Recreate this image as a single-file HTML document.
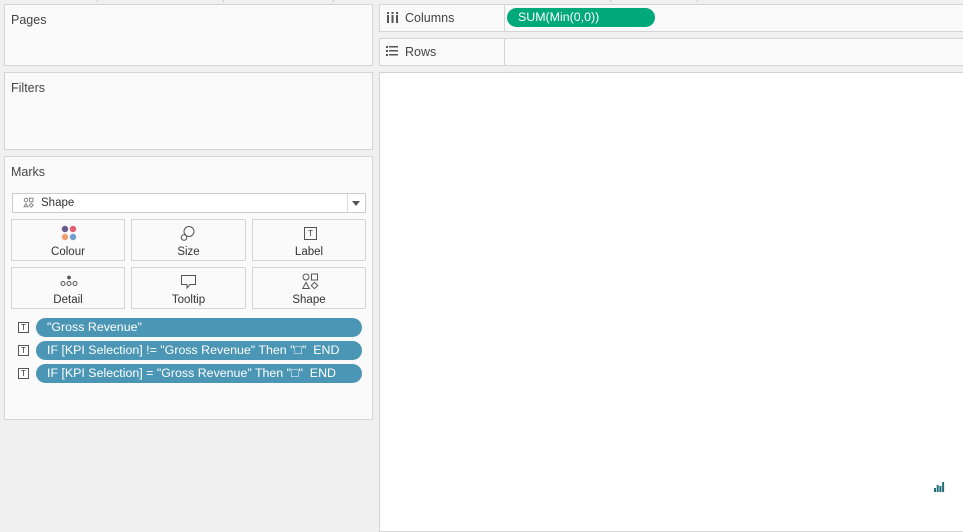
<!DOCTYPE html>
<html><head><style>
body{margin:0;width:963px;height:517px;background:#f0f0f0;font-family:"Liberation Sans",sans-serif;font-size:12px;color:#333;position:relative;overflow:hidden}
.a{position:absolute;box-sizing:border-box}
.panel{background:#fafafa;border:1px solid #d4d4d4}
.t{position:absolute;left:6px;top:8px;color:#444;font-size:12.5px}
.btn{background:#fafafa;border:1px solid #d4d4d4;text-align:center;font-size:11.5px}
.btn span{position:absolute;bottom:2px;left:0;right:0}
.pill{background:#4a96b4;color:#fff;border-radius:10px;height:19px;line-height:19px;padding-left:11px;font-size:12.4px}
.ti{width:11px;height:11px;border:1px solid #555;font-size:8px;line-height:10px;text-align:center;color:#333;background:#fff}
</style></head><body>
<div class="a" style="left:97px;top:0;width:1px;height:2px;background:#ccc"></div>
<div class="a" style="left:223px;top:0;width:1px;height:2px;background:#ccc"></div>
<div class="a" style="left:333px;top:0;width:1px;height:2px;background:#ccc"></div>
<div class="a" style="left:610px;top:0;width:1px;height:2px;background:#ccc"></div>
<div class="a" style="left:697px;top:0;width:1px;height:2px;background:#ccc"></div>
<div class="a panel" style="left:4px;top:4px;width:369px;height:62px"><div class="t">Pages</div></div>
<div class="a panel" style="left:4px;top:72px;width:369px;height:78px"><div class="t">Filters</div></div>
<div class="a panel" style="left:4px;top:156px;width:369px;height:264px"><div class="t">Marks</div></div>
<div class="a" style="left:12px;top:193px;width:354px;height:20px;background:#fff;border:1px solid #ccc">
<svg style="position:absolute;left:10px;top:3px" width="11" height="11" viewBox="0 0 11 11" fill="none" stroke="#888" stroke-width="1"><circle cx="3" cy="3" r="1.8"/><rect x="6.5" y="1.2" width="3.5" height="3.5"/><path d="M3 6.5L5 9.8H1z"/><path d="M8.2 6.2l2 2-2 2-2-2z"/></svg>
<span style="position:absolute;left:28px;top:3px;font-size:11.5px">Shape</span>
<div style="position:absolute;left:334px;top:0;width:1px;height:18px;background:#ddd"></div>
<div style="position:absolute;left:339px;top:7px;border:4px solid transparent;border-top:5px solid #555;border-bottom:0"></div></div>
<div class="a btn" style="left:11px;top:219px;width:114px;height:42px">
<svg style="position:absolute;left:49px;top:5px" width="16" height="16"><circle cx="4" cy="4" r="3.2" fill="#6b5b8c"/><circle cx="12" cy="4" r="3.2" fill="#e06070"/><circle cx="4" cy="12" r="3.2" fill="#f0a070"/><circle cx="12" cy="12" r="3.2" fill="#6e9fd0"/></svg><span>Colour</span></div>
<div class="a btn" style="left:131px;top:219px;width:115px;height:42px">
<svg style="position:absolute;left:48px;top:5px" width="16" height="17" fill="none" stroke="#555"><circle cx="9" cy="6.5" r="5"/><circle cx="4" cy="12.5" r="2.8" fill="#fafafa"/></svg><span>Size</span></div>
<div class="a btn" style="left:252px;top:219px;width:114px;height:42px">
<div class="a ti" style="left:51px;top:7px;width:13px;height:13px;line-height:11px;background:#fafafa">T</div><span>Label</span></div>
<div class="a btn" style="left:11px;top:267px;width:114px;height:42px">
<svg style="position:absolute;left:48px;top:7px" width="18" height="12" fill="none" stroke="#555"><circle cx="9" cy="2.5" r="1.9" fill="#555" stroke="none"/><circle cx="3" cy="8.5" r="2"/><circle cx="9" cy="8.5" r="2"/><circle cx="15" cy="8.5" r="2"/></svg><span>Detail</span></div>
<div class="a btn" style="left:131px;top:267px;width:115px;height:42px">
<svg style="position:absolute;left:48px;top:6px" width="17" height="16" fill="none" stroke="#555"><path d="M1.5 1.5h14v9h-5.5l-3 3.5v-3.5h-5.5z"/></svg><span>Tooltip</span></div>
<div class="a btn" style="left:252px;top:267px;width:114px;height:42px">
<svg style="position:absolute;left:49px;top:5px" width="17" height="17" fill="none" stroke="#555"><circle cx="4" cy="4" r="3"/><rect x="9.5" y="1" width="6" height="6"/><path d="M4 9.5L7.3 15.5H.7z"/><path d="M12.5 9.3l3.2 3.2-3.2 3.2-3.2-3.2z"/></svg><span>Shape</span></div>
<div class="a ti" style="left:18px;top:322px">T</div>
<div class="a pill" style="left:36px;top:318px;width:326px">"Gross Revenue"</div>
<div class="a ti" style="left:18px;top:345px">T</div>
<div class="a pill" style="left:36px;top:341px;width:326px">IF [KPI Selection] != "Gross Revenue" Then "□"&nbsp; END</div>
<div class="a ti" style="left:18px;top:368px">T</div>
<div class="a pill" style="left:36px;top:364px;width:326px">IF [KPI Selection] = "Gross Revenue" Then "□"&nbsp; END</div>

<div class="a" style="left:379px;top:4px;width:590px;height:28px;background:#fafafa;border:1px solid #d4d4d4"></div>
<div class="a" style="left:504px;top:4px;width:1px;height:28px;background:#d4d4d4"></div>
<svg class="a" style="left:387px;top:12px" width="12" height="12" fill="#555"><rect x="0" y="0" width="2" height="2"/><rect x="0" y="3" width="2" height="8"/><rect x="4.5" y="0" width="2" height="2"/><rect x="4.5" y="3" width="2" height="8"/><rect x="9" y="0" width="2" height="2"/><rect x="9" y="3" width="2" height="8"/></svg>
<div class="a" style="left:405px;top:11px;color:#444;font-size:12.5px">Columns</div>
<div class="a" style="left:507px;top:8px;width:148px;height:19px;background:#00a97a;border-radius:10px;color:#fff;line-height:19px;padding-left:11px;font-size:12.4px">SUM(Min(0,0))</div>
<div class="a" style="left:379px;top:38px;width:590px;height:28px;background:#fafafa;border:1px solid #d4d4d4"></div>
<div class="a" style="left:504px;top:38px;width:1px;height:28px;background:#d4d4d4"></div>
<svg class="a" style="left:386px;top:45px" width="12" height="11" fill="#555"><rect x="0" y="1" width="2" height="2"/><rect x="3" y="1" width="9" height="1.5"/><rect x="0" y="5" width="2" height="2"/><rect x="3" y="5" width="9" height="1.5"/><rect x="0" y="9" width="2" height="2"/><rect x="3" y="9" width="9" height="1.5"/></svg>
<div class="a" style="left:405px;top:45px;color:#444;font-size:12.5px">Rows</div>
<div class="a" style="left:379px;top:72px;width:590px;height:460px;background:#fff;border:1px solid #d4d4d4"></div>
<svg class="a" style="left:933px;top:482px" width="12" height="10" fill="#1f6e7a"><rect x="1" y="6" width="2" height="4"/><rect x="3.7" y="3" width="2" height="7"/><rect x="6.4" y="4" width="2" height="6"/><rect x="9.1" y="0" width="2" height="10"/></svg>
</body></html>
